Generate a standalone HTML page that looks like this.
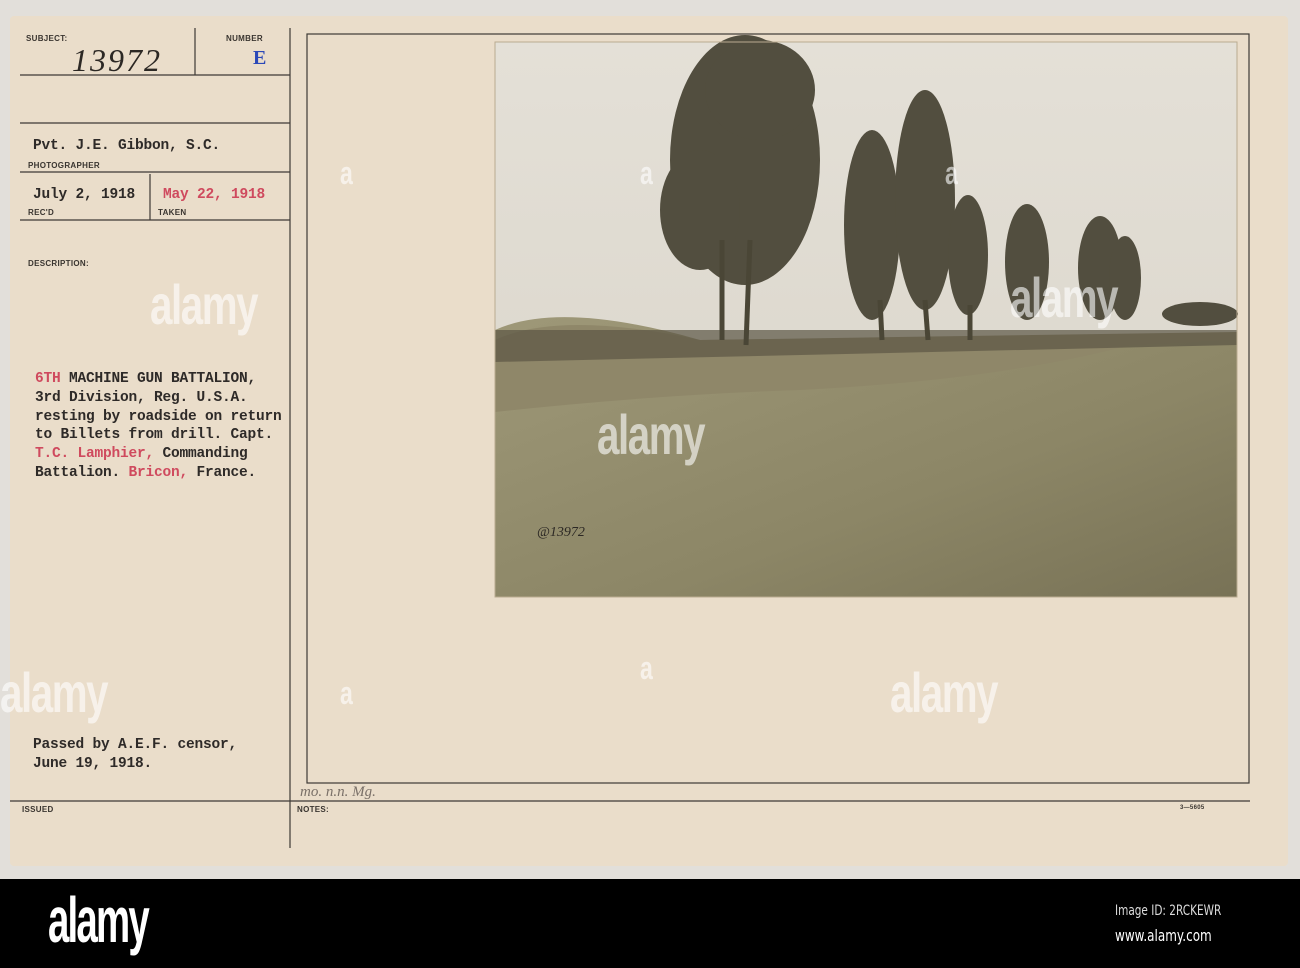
<!DOCTYPE html>
<html><head><meta charset="utf-8"><style>
html,body{margin:0;padding:0}
body{width:1300px;height:968px;position:relative;overflow:hidden;background:#e2dfda;font-family:"Liberation Mono",monospace}
.card{position:absolute;left:10px;top:16px;width:1278px;height:850px;background:#eaddca;border-radius:4px}
.a{position:absolute;white-space:nowrap}
.lbl{font-family:"Liberation Sans",sans-serif;font-size:8px;font-weight:bold;color:#3a3530;letter-spacing:.3px}
.ty{font-size:14.5px;color:#2e2a28;font-weight:bold;letter-spacing:-.2px}
.red{color:#cf4a5e}
.wm{position:absolute;font-family:"Liberation Sans",sans-serif;font-weight:bold;color:rgba(255,255,255,.6);transform:scaleX(.72);transform-origin:left top;letter-spacing:-2px}
.foot{position:absolute;left:0;top:879px;width:1300px;height:89px;background:#000}
</style></head><body>
<div class="card"></div>
<svg width="1300" height="968" style="position:absolute;left:0;top:0">
<g stroke="#3e3a36" stroke-width="1.2" fill="none">
<line x1="20" y1="75" x2="290" y2="75"/>
<line x1="195" y1="28" x2="195" y2="75"/>
<line x1="20" y1="123" x2="290" y2="123"/>
<line x1="20" y1="172" x2="290" y2="172"/>
<line x1="20" y1="220" x2="290" y2="220"/>
<line x1="150" y1="174" x2="150" y2="220"/>
<line x1="290" y1="28" x2="290" y2="848"/>
<rect x="307" y="34" width="942" height="749"/>
<line x1="10" y1="801" x2="1250" y2="801"/>
</g>
<defs>
<linearGradient id="sky" x1="0" y1="0" x2="0" y2="1"><stop offset="0" stop-color="#e4e0d7"/><stop offset="1" stop-color="#d9d4c9"/></linearGradient>
<linearGradient id="fld" x1="0" y1="0" x2="1" y2="1"><stop offset="0" stop-color="#9e9878"/><stop offset=".6" stop-color="#8c8666"/><stop offset="1" stop-color="#787256"/></linearGradient>
</defs>
<rect x="495" y="42" width="742" height="555" fill="url(#sky)"/>
<path d="M495 330 Q560 300 700 340 L1237 335 L1237 597 L495 597Z" fill="url(#fld)"/>
<path d="M495 340 Q560 310 700 340 L1237 332 L1237 340 L1130 345 Q1000 380 800 390 Q650 395 495 412Z" fill="#8f8769"/>
<path d="M495 330 L1237 330 L1237 345 L495 362Z" fill="#5b5644" opacity=".7"/>
<g fill="#524e3f">
<ellipse cx="745" cy="160" rx="75" ry="125"/><ellipse cx="700" cy="210" rx="40" ry="60"/><ellipse cx="760" cy="90" rx="55" ry="50"/>
<ellipse cx="872" cy="225" rx="28" ry="95"/><ellipse cx="925" cy="200" rx="30" ry="110"/>
<ellipse cx="968" cy="255" rx="20" ry="60"/><ellipse cx="1027" cy="262" rx="22" ry="58"/>
<ellipse cx="1100" cy="268" rx="22" ry="52"/><ellipse cx="1125" cy="278" rx="16" ry="42"/>
<ellipse cx="1200" cy="314" rx="38" ry="12"/>
</g>
<g stroke="#4a4636" stroke-width="5"><line x1="722" y1="240" x2="722" y2="340"/><line x1="750" y1="240" x2="746" y2="345"/><line x1="880" y1="300" x2="882" y2="340"/><line x1="925" y1="300" x2="928" y2="340"/><line x1="970" y1="305" x2="970" y2="340"/></g>
<rect x="495" y="42" width="742" height="555" fill="none" stroke="#b9ab90" stroke-width="1"/>
</svg>
<div class="a lbl" style="left:26px;top:34px">SUBJECT:</div>
<div class="a lbl" style="left:226px;top:34px">NUMBER</div>
<div class="a" style="left:253px;top:47px;font-family:'Liberation Serif',serif;font-weight:bold;font-size:20px;color:#2b48b8">E</div>
<div class="a" style="left:72px;top:42px;font-family:'Liberation Serif',serif;font-style:italic;font-size:32px;color:#2c2824;letter-spacing:2px">13972</div>
<div class="a ty" style="left:33px;top:138px">Pvt. J.E. Gibbon, S.C.</div>
<div class="a lbl" style="left:28px;top:161px">PHOTOGRAPHER</div>
<div class="a ty" style="left:33px;top:187px">July 2, 1918</div>
<div class="a ty red" style="left:163px;top:187px">May 22, 1918</div>
<div class="a lbl" style="left:28px;top:208px">REC'D</div>
<div class="a lbl" style="left:158px;top:208px">TAKEN</div>
<div class="a lbl" style="left:28px;top:259px">DESCRIPTION:</div>
<div class="a ty" style="left:35px;top:370px;line-height:18.8px">
<span class="red">6TH</span> MACHINE GUN BATTALION,<br>3rd Division, Reg. U.S.A.<br>resting by roadside on return<br>to Billets from drill. Capt.<br><span class="red">T.C. Lamphier,</span> Commanding<br>Battalion. <span class="red">Bricon,</span> France.</div>
<div class="a ty" style="left:33px;top:736px;line-height:19px">Passed by A.E.F. censor,<br>June 19, 1918.</div>
<div class="a lbl" style="left:22px;top:805px">ISSUED</div>
<div class="a lbl" style="left:297px;top:805px">NOTES:</div>
<div class="a" style="left:300px;top:784px;font-family:'Liberation Serif',serif;font-style:italic;font-size:15px;color:#7a7068">mo. n.n. Mg.</div>
<div class="a" style="left:537px;top:525px;font-family:'Liberation Serif',serif;font-style:italic;font-size:14px;color:#2c2824">@13972</div>
<div class="a lbl" style="left:1180px;top:805px;font-size:6px">3—5605</div>
<div class="wm" style="left:150px;top:272px;font-size:56px">alamy</div>
<div class="wm" style="left:597px;top:402px;font-size:56px">alamy</div>
<div class="wm" style="left:1010px;top:265px;font-size:56px">alamy</div>
<div class="wm" style="left:0px;top:660px;font-size:56px">alamy</div>
<div class="wm" style="left:890px;top:660px;font-size:56px">alamy</div>
<div class="wm" style="left:340px;top:155px;font-size:32px">a</div>
<div class="wm" style="left:340px;top:675px;font-size:32px">a</div>
<div class="wm" style="left:640px;top:155px;font-size:32px">a</div>
<div class="wm" style="left:640px;top:650px;font-size:32px">a</div>
<div class="wm" style="left:945px;top:155px;font-size:32px">a</div>
<div class="foot">
<div class="a" style="left:48px;top:4px;font-family:'Liberation Sans',sans-serif;font-weight:bold;font-size:64px;color:#fff;transform:scaleX(.6);transform-origin:left top;letter-spacing:-3px">alamy</div>
<div class="a" style="left:1115px;top:24px;font-family:'DejaVu Sans',sans-serif;font-size:14px;color:#ddd;transform:scaleX(.75);transform-origin:left top">Image ID: 2RCKEWR</div>
<div class="a" style="left:1115px;top:47px;font-family:'DejaVu Sans',sans-serif;font-size:16px;color:#fff;transform:scaleX(.75);transform-origin:left top">www.alamy.com</div>
</div>
</body></html>
